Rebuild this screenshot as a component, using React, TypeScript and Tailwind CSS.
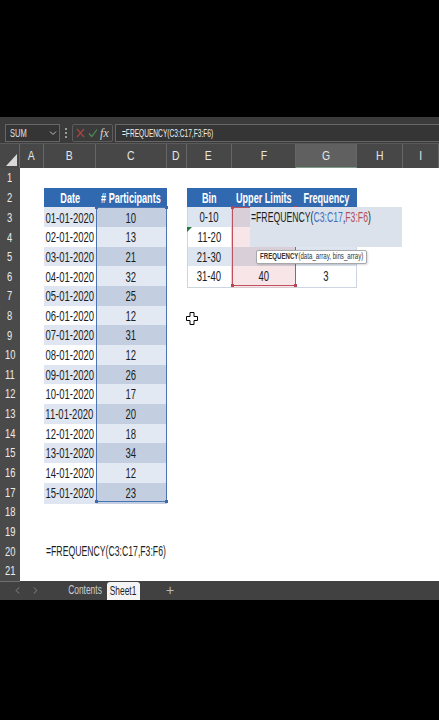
import React from "react";
import { ChevronLeft, ChevronRight } from "lucide-react";

const dates = [
  "01-01-2020", "02-01-2020", "03-01-2020", "04-01-2020", "05-01-2020",
  "06-01-2020", "07-01-2020", "08-01-2020", "09-01-2020", "10-01-2020",
  "11-01-2020", "12-01-2020", "13-01-2020", "14-01-2020", "15-01-2020",
];
const participants = [10, 13, 21, 32, 25, 12, 31, 12, 26, 17, 20, 18, 34, 12, 23];
const bins = ["0-10", "11-20", "21-30", "31-40"];
const letters = ["A", "B", "C", "D", "E", "F", "G", "H", "I"];

// row header + columns A..I
const GRID = "grid grid-cols-[20px_23.5px_52.5px_70.5px_20px_45.5px_64px_61px_46px_36px]";

// Calibri-ish narrow text
function T({ children, className = "scale-x-[0.68]" }: { children: React.ReactNode; className?: string }) {
  return <span className={`inline-block whitespace-nowrap ${className}`}>{children}</span>;
}

type Cell = { cls: string; text?: React.ReactNode; left?: boolean; head?: boolean };

const HEAD = "bg-[#3169b1] text-white font-bold";

function rowCells(r: number): Cell[] {
  const c: Cell[] = letters.map(() => ({ cls: "" }));
  if (r === 2) {
    c[1] = { cls: HEAD, text: "Date", head: true };
    c[2] = { cls: HEAD, text: "# Participants", head: true };
    c[4] = { cls: HEAD, text: "Bin", head: true };
    c[5] = { cls: HEAD, text: "Upper Limits", head: true };
    c[6] = { cls: HEAD, text: "Frequency", head: true };
  }
  if (r >= 3 && r <= 17) {
    const i = r - 3;
    const band = i % 2 === 0;
    c[1] = { cls: band ? "bg-[#dfe6f1]" : "bg-white", text: dates[i] };
    c[2] = { cls: band ? "bg-[#c3cfe0]" : "bg-[#e3e9f2]", text: participants[i] };
  }
  if (r >= 3 && r <= 6) {
    const i = r - 3;
    const band = i % 2 === 0;
    c[4] = {
      cls: `border-l border-b border-r border-[#cdd5e1] ${band ? "bg-[#dde5f1]" : "bg-white"}`,
      text: bins[i],
    };
    c[5] = {
      cls: `border-b border-r border-[#d8c8cf] ${band ? "bg-[#d9cfd8]" : "bg-[#f7e5e7]"}`,
      text: r === 6 ? "40" : undefined,
    };
    c[6] = {
      cls: `border-b border-r border-[#cdd5e1] ${band ? "bg-[#dde5f1]" : "bg-white"}`,
      text: r === 6 ? "3" : undefined,
    };
  }
  if (r === 20) {
    c[1] = { cls: "pl-[2px]", text: "=FREQUENCY(C3:C17,F3:F6)", left: true };
  }
  return c;
}

function Handles({ dot }: { dot: string }) {
  return (
    <>
      <span className={`absolute -left-[2px] -top-[2px] w-[3px] h-[3px] ${dot}`} />
      <span className={`absolute -right-[2px] -top-[2px] w-[3px] h-[3px] ${dot}`} />
      <span className={`absolute -left-[2px] -bottom-[2px] w-[3px] h-[3px] ${dot}`} />
      <span className={`absolute -right-[2px] -bottom-[2px] w-[3px] h-[3px] ${dot}`} />
    </>
  );
}

function FormulaBar() {
  return (
    <div className="h-[26px] bg-[#3b3b3b] flex items-end pb-[1px] pl-[5px]">
      <div className="w-[55px] h-[18px] border border-[#666] bg-[#353535] flex items-center justify-between pl-[4px] pr-[2px] text-[#e2e2e2]">
        <T className="text-[10px] scale-x-[0.75] origin-left">SUM</T>
        <svg width="8" height="6" viewBox="0 0 8 6">
          <path d="M1 1.5 L4 4.5 L7 1.5" fill="none" stroke="#bdbdbd" strokeWidth="1" />
        </svg>
      </div>
      <div className="w-[12px] h-[18px] flex flex-col items-center justify-center gap-[2px]">
        <span className="w-[2px] h-[2px] bg-[#9a9a9a]" />
        <span className="w-[2px] h-[2px] bg-[#9a9a9a]" />
        <span className="w-[2px] h-[2px] bg-[#9a9a9a]" />
      </div>
      <div className="w-[41px] h-[18px] border border-[#5c5c5c] rounded-[2px] flex items-center justify-around px-[2px]">
        <svg width="9" height="10" viewBox="0 0 9 10">
          <path d="M1 1 L8 9 M8 1 L1 9" stroke="#a8453f" strokeWidth="1.2" />
        </svg>
        <svg width="10" height="10" viewBox="0 0 10 10">
          <path d="M1 5.5 L3.8 8.5 L9 1.5" fill="none" stroke="#4f8d57" strokeWidth="1.2" />
        </svg>
        <span className="text-[#d8d8d8] italic text-[12px] font-['Liberation_Serif',serif] leading-none">fx</span>
      </div>
      <div className="ml-[2px] flex-1 h-[18px] border-y border-l border-[#666] bg-[#353535] flex items-center pl-[6px] text-[#eeeeee]">
        <span className="inline-block whitespace-nowrap text-[11px] scale-x-[0.6] origin-left">=FREQUENCY(C3:C17,F3:F6)</span>
      </div>
    </div>
  );
}

function ColumnHeaders() {
  return (
    <div className={`${GRID} h-[25px] bg-[#474747] border-t border-[#5a5a5a] text-[#e6e6e6] text-[13px]`}>
      <div className="relative border-r border-[#666]">
        <svg className="absolute right-[2px] bottom-[2px]" width="11" height="12" viewBox="0 0 11 12">
          <polygon points="11,0 11,12 0,12" fill="#d9d9d9" />
        </svg>
      </div>
      {letters.map((l) => (
        <div
          key={l}
          className={`flex items-center justify-center border-r border-[#666] ${
            l === "G" ? "bg-[#606060] border-b border-b-[#7f9c86]" : ""
          }`}
        >
          <T className="scale-x-[0.8]">{l}</T>
        </div>
      ))}
    </div>
  );
}

function Sheet() {
  const rows = Array.from({ length: 21 }, (_, i) => i + 1);
  return (
    <div className="relative bg-white text-[#1d1d1d] text-[14px]">
      {rows.map((r) => (
        <div key={r} className={`${GRID} h-[19.67px]`}>
          <div className="flex items-center justify-center bg-[#4a4a4a] border-b border-[#6f6f6f] text-[#ececec] text-[13px]">
            <T className="scale-x-[0.72]">{r}</T>
          </div>
          {rowCells(r).map((cell, ci) => (
            <div
              key={ci}
              className={`flex items-center h-full ${cell.left ? "justify-start overflow-visible" : "justify-center"} ${cell.cls}`}
            >
              {cell.text !== undefined && (
                <T
                  className={
                    cell.left
                      ? "scale-x-[0.62] origin-left"
                      : cell.head
                        ? "scale-x-[0.65]"
                        : "scale-x-[0.68]"
                  }
                >
                  {cell.text}
                </T>
              )}
            </div>
          ))}
        </div>
      ))}

      {/* C3:C17 reference */}
      <div className="absolute left-[96px] top-[39.3px] w-[70.5px] h-[295px] border border-[#4a74b4]">
        <Handles dot="bg-[#3e68a8]" />
      </div>

      {/* F3:F6 reference */}
      <div className="absolute left-[232px] top-[39.3px] w-[64px] h-[78.7px] border border-[#c0505e]">
        <Handles dot="bg-[#b04856]" />
      </div>

      {/* in-cell editor */}
      <div className="absolute left-[250px] top-[39.3px] w-[152px] h-[39.3px] bg-[#dbe2eb]">
        <div className="h-[19.67px] flex items-center pl-[1px]">
          <span className="inline-block whitespace-nowrap scale-x-[0.62] origin-left">
            =FREQUENCY(<span className="text-[#4170c0]">C3:C17</span>,<span className="text-[#b8505c]">F3:F6</span>)
          </span>
        </div>
      </div>

      {/* function hint */}
      <div className="absolute left-[256px] top-[82px] w-[111px] h-[14px] bg-white border border-[#a8a8a8] rounded-[2px] shadow-[1px_1px_2px_rgba(0,0,0,0.15)] flex items-center pl-[3px] text-[9px] text-[#333]">
        <span className="inline-block whitespace-nowrap scale-x-[0.68] origin-left">
          <b>FREQUENCY</b>(data_array, bins_array)
        </span>
      </div>

      {/* error indicator on E4 */}
      <svg className="absolute left-[187px] top-[59px]" width="5" height="5" viewBox="0 0 5 5">
        <polygon points="0,0 5,0 0,5" fill="#1d7a3c" />
      </svg>

      {/* mouse pointer */}
      <svg className="absolute left-[186px] top-[144px]" width="12" height="13" viewBox="0 0 12 13">
        <polygon
          points="4,0.5 8,0.5 8,4.5 11.5,4.5 11.5,8.5 8,8.5 8,12.5 4,12.5 4,8.5 0.5,8.5 0.5,4.5 4,4.5"
          fill="#fff"
          stroke="#000"
          strokeWidth="1"
        />
      </svg>
    </div>
  );
}

function SheetTabs() {
  return (
    <div className="h-[19px] bg-[#414141] flex items-stretch text-[12px] text-[#cfcfcf]">
      <div className="w-[12px]" />
      <div className="flex items-center">
        <ChevronLeft size={11} color="#8a8a8a" />
      </div>
      <div className="w-[7px]" />
      <div className="flex items-center">
        <ChevronRight size={11} color="#8a8a8a" />
      </div>
      <div className="w-[24px]" />
      <div className="flex items-center w-[40px] justify-center">
        <T className="scale-x-[0.7]">Contents</T>
      </div>
      <div className="w-[2px]" />
      <div className="w-[33px] bg-[#f4f4f4] text-[#222] flex items-center justify-center rounded-t-[3px] mt-[1px]">
        <T className="scale-x-[0.7]">Sheet1</T>
      </div>
      <div className="w-[26px]" />
      <div className="flex items-center text-[#b8b8b8] text-[14px]">+</div>
    </div>
  );
}

export default function App() {
  return (
    <div className="w-[439px] h-[720px] overflow-hidden bg-black font-['Liberation_Sans',Arial,sans-serif]">
      <div className="h-[117px] bg-black" />
      <FormulaBar />
      <ColumnHeaders />
      <Sheet />
      <SheetTabs />
      <div className="h-[120px] bg-black" />
    </div>
  );
}
